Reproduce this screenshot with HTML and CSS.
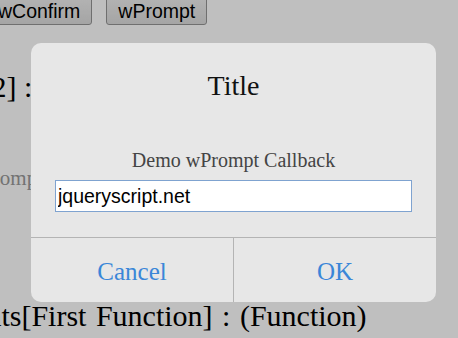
FILE: index.html
```html
<!DOCTYPE html>
<html lang="en">
<head>
  <meta charset="UTF-8" />
  <meta name="viewport" content="width=device-width, initial-scale=1.0" />
  <title>wPrompt Demo</title>
  <link rel="stylesheet" href="styles.css">
</head>
<body>
  <div class="toolbar">
    <button class="demo-btn">wConfirm</button>
    <button class="demo-btn">wPrompt</button>
  </div>

  <div class="log">
    <p class="log-line first">arguments[2] : jqueryscript.net</p>
    <p class="log-note">wPrompt Callback</p>
    <p class="log-line last">arguments[First Function] : (Function)</p>
  </div>

  <div class="mask"></div>

  <div class="dialog">
    <h3 class="dialog-title">Title</h3>
    <p class="dialog-msg">Demo wPrompt Callback</p>
    <input class="dialog-input" type="text" value="jqueryscript.net">
    <div class="dialog-actions">
      <button class="dialog-btn">Cancel</button>
      <button class="dialog-btn">OK</button>
    </div>
  </div>
</body>
</html>
```

FILE: styles.css
```css
* {
  box-sizing: border-box;
}
html, body {
  margin: 0;
  padding: 0;
  overflow: hidden;
}
body {
  background: #fff;
  color: #000;
  font-family: 'Liberation Serif', 'Times New Roman', serif;
  width: 458px;
  height: 338px;
}
.toolbar {
  display: flex;
  gap: 14px;
  margin-top: -11px;
  margin-left: -14px;
}
.demo-btn {
  font-family: 'Liberation Sans', Arial, sans-serif;
  font-size: 19.5px;
  line-height: 22px;
  padding: 10px 11px 2px;
  color: #000;
  background: linear-gradient(#f5f5f5, #dcdcdc);
  border: 1px solid #959595;
  border-radius: 3px;
}
.log p {
  white-space: nowrap;
}
.log .log-line {
  font-size: 30px;
  line-height: 36px;
}
.log .first {
  margin: 44px 0 0;
  text-indent: -143px;
}
.log .log-note {
  margin: 61px 0 0;
  font-size: 21px;
  color: #999;
  text-indent: -34px;
}
.log .last {
  margin: 107px 0 0;
  text-indent: -103px;
  word-spacing: 2px;
}
.mask {
  position: absolute;
  inset: 0;
  background: rgba(0, 0, 0, 0.25);
}
.dialog {
  position: absolute;
  left: 31px;
  top: 43px;
  width: 405px;
  height: 259px;
  background: #e7e7e7;
  border-radius: 10px;
  display: flex;
  flex-direction: column;
  align-items: center;
  overflow: hidden;
}
.dialog-title {
  margin: 27px 0 0;
  font-size: 28px;
  font-weight: normal;
  line-height: 31px;
  color: #111;
}
.dialog-msg {
  margin: 48px 0 0;
  font-size: 20px;
  line-height: 22px;
  color: #444;
}
.dialog-input {
  margin-top: 9px;
  width: 357px;
  height: 32px;
  padding: 0 2px;
  font-family: 'Liberation Sans', Arial, sans-serif;
  font-size: 19.5px;
  color: #000;
  background: #fff;
  border: 1px solid #7fa3d0;
  outline: none;
}
.dialog-actions {
  margin-top: 25px;
  width: 100%;
  flex: 1;
  display: flex;
  border-top: 1px solid #b4b4b4;
}
.dialog-btn {
  flex: 1;
  font-family: 'Liberation Serif', 'Times New Roman', serif;
  font-size: 25px;
  color: #3a86d8;
  background: none;
  border: none;
  padding: 3px 0 0;
}
.dialog-btn + .dialog-btn {
  border-left: 1px solid #b4b4b4;
}
```
